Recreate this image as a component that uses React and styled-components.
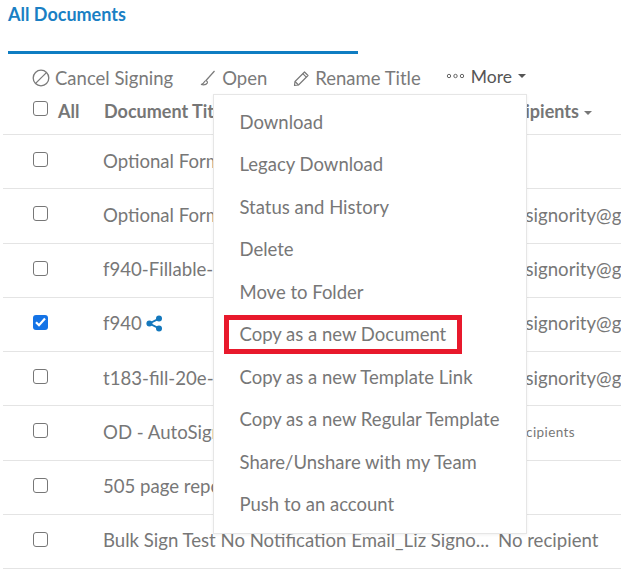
import React from 'react';
import styled, { createGlobalStyle } from 'styled-components';

const GlobalStyle = createGlobalStyle`
  html, body {
    margin: 0;
    padding: 0;
    background: #fff;
    overflow: hidden;
  }
  body {
    font-family: Lato, "Liberation Sans", sans-serif;
    color: #6f6f6f;
  }
`;

const Page = styled.div`
  position: relative;
  width: 621px;
  height: 570px;
  overflow: hidden;
`;

const Tabs = styled.div`
  margin-left: 8px;
  width: 350px;
  height: 54px;
  box-sizing: border-box;
  border-bottom: 3px solid #0f7dc2;
  padding-top: 4px;
  font-size: 18px;
  line-height: 20px;
  font-weight: 700;
  color: #1a7fc4;
`;

const Toolbar = styled.div`
  display: flex;
  align-items: center;
  height: 48px;
  padding-left: 32px;
  font-size: 18.5px;
  color: #7a7a7a;
`;

const Action = styled.div`
  display: flex;
  align-items: center;
  gap: 5px;
  margin-right: ${({ $gap }) => $gap}px;
  color: ${({ $dark }) => ($dark ? '#555' : 'inherit')};
  font-size: ${({ $dark }) => ($dark ? '17.5px' : 'inherit')};
  position: relative;
  top: ${({ $dark }) => ($dark ? '-2px' : '0')};
  white-space: nowrap;
`;

const Caret = styled.span`
  display: inline-block;
  width: 0;
  height: 0;
  vertical-align: middle;
  margin-left: ${({ $left }) => $left}px;
  border-left: 4.5px solid transparent;
  border-right: 4.5px solid transparent;
  border-top: 4.5px solid ${({ $color }) => $color || '#555'};
`;

const HeaderRow = styled.div`
  display: grid;
  grid-template-columns: 25px 46px 392px 1fr;
  align-items: center;
  height: 33px;
  box-sizing: border-box;
  margin-left: 3px;
  padding-left: 30px;
  padding-bottom: 14px;
  border-bottom: 1px solid #e4e4e4;
  font-size: 18px;
  line-height: 18px;
  font-weight: 700;
  color: #767676;
  white-space: nowrap;
`;

const Row = styled.div`
  display: grid;
  grid-template-columns: 70px 395px 1fr;
  align-items: center;
  height: 54.25px;
  box-sizing: border-box;
  margin-left: 3px;
  padding-left: 30px;
  padding-bottom: 2px;
  border-bottom: 1px solid #e4e4e4;
  font-size: 18.6px;
  color: #777;
  white-space: nowrap;
  overflow: hidden;
`;

const Box = styled.span`
  display: flex;
  align-items: center;
  justify-content: center;
  width: 15px;
  height: 15px;
  box-sizing: border-box;
  border-radius: 3px;
  border: ${({ $checked }) => ($checked ? 'none' : '1.5px solid #777')};
  background: ${({ $checked }) => ($checked ? '#1473e6' : '#fff')};
  position: relative;
  top: ${({ $up }) => ($up ? '-3px' : '-1px')};
`;

const Title = styled.span`
  display: flex;
  align-items: center;
  gap: 4px;
  overflow: hidden;
`;

const Recipient = styled.span`
  font-size: ${({ $small }) => ($small ? '13.5px' : '18.6px')};
  letter-spacing: ${({ $small }) => ($small ? '0.4px' : '0')};
`;

const Menu = styled.div`
  position: absolute;
  left: 213px;
  top: 94px;
  width: 314px;
  height: 440px;
  box-sizing: border-box;
  padding-top: 5.5px;
  background: #fff;
  border: 1px solid #e6e6e6;
  box-shadow: 0 1px 3px rgba(0, 0, 0, 0.06);
`;

const MenuItem = styled.div`
  position: relative;
  height: 42.5px;
  line-height: 42.5px;
  padding-left: 25.5px;
  font-size: 18.5px;
  color: #777;
  white-space: nowrap;

  ${({ $marked }) =>
    $marked &&
    `
    &::after {
      content: '';
      position: absolute;
      left: 10px;
      top: 1.5px;
      width: 238px;
      height: 39px;
      box-sizing: border-box;
      border: 5px solid #e8192c;
    }
  `}
`;

const CancelIcon = () => (
  <svg width="18" height="18" viewBox="0 0 18 18" fill="none" stroke="#7a7a7a" strokeWidth="1.3">
    <circle cx="9" cy="9" r="7.8" />
    <path d="M3.6 14.4 14.4 3.6" />
  </svg>
);

const OpenIcon = () => (
  <svg width="18" height="18" viewBox="0 0 18 18" fill="none" stroke="#7a7a7a" strokeWidth="1.2">
    <path d="M15.5 2 7 11.5" />
    <path d="M7 11.5c-1.5.3-2 1.6-2.4 2.6-.3.7-1.3 1.1-2.6 1.4 2 .4 5.2.4 6.2-1.4.5-1 .1-2-1.2-2.6z" />
  </svg>
);

const PencilIcon = () => (
  <svg width="17" height="17" viewBox="0 0 17 17" fill="none" stroke="#7a7a7a" strokeWidth="1.2" strokeLinejoin="round">
    <path d="M2 11.5 11.5 2l3.5 3.5L5.5 15 1.5 15.5z" />
    <path d="M9.8 3.7l3.5 3.5M2 11.5l3.5 3.5" />
  </svg>
);

const DotsIcon = () => (
  <svg width="20" height="6" viewBox="0 0 20 6" fill="none" stroke="#666" strokeWidth="1">
    <circle cx="3" cy="3" r="1.7" />
    <circle cx="9.5" cy="3" r="1.7" />
    <circle cx="16" cy="3" r="1.7" />
  </svg>
);

const CheckIcon = () => (
  <svg width="11" height="10" viewBox="0 0 11 10" fill="none" stroke="#fff" strokeWidth="2.2">
    <path d="M1 5.2 4 8.2 10 1.6" />
  </svg>
);

const ShareIcon = () => (
  <svg width="17" height="17" viewBox="0 0 17 17" fill="#1478bd" stroke="#1478bd">
    <circle cx="13" cy="3.6" r="3" stroke="none" />
    <circle cx="3.4" cy="8.5" r="3" stroke="none" />
    <circle cx="13" cy="13.4" r="3" stroke="none" />
    <path d="M13 3.6 3.4 8.5 13 13.4" fill="none" strokeWidth="1.8" />
  </svg>
);

const rows = [
  { title: 'Optional Form 306 Declaration', recipient: '' },
  { title: 'Optional Form 306 Declaration', recipient: 'otosignority@gmail.com' },
  { title: 'f940-Fillable-2020', recipient: 'otosignority@gmail.com' },
  { title: 'f940', recipient: 'otosignority@gmail.com', checked: true, shared: true },
  { title: 't183-fill-20e-2020', recipient: 'otosignority@gmail.com' },
  { title: 'OD - AutoSign Signority', recipient: '2 Recipients', small: true },
  { title: '505 page report', recipient: '' },
  { title: 'Bulk Sign Test No Notification Email_Liz Signo...', recipient: 'No recipient' },
];

const menuItems = [
  'Download',
  'Legacy Download',
  'Status and History',
  'Delete',
  'Move to Folder',
  'Copy as a new Document',
  'Copy as a new Template Link',
  'Copy as a new Regular Template',
  'Share/Unshare with my Team',
  'Push to an account',
];

export default function App() {
  return (
    <Page>
      <GlobalStyle />
      <Tabs>All Documents</Tabs>
      <Toolbar>
        <Action $gap={26}><CancelIcon />Cancel Signing</Action>
        <Action $gap={26}><OpenIcon />Open</Action>
        <Action $gap={25}><PencilIcon />Rename Title</Action>
        <Action $dark>
          <DotsIcon />More<Caret $left={1} />
        </Action>
      </Toolbar>
      <HeaderRow>
        <Box $up />
        <span>All</span>
        <span>Document Title<Caret $left={5} /></span>
        <span>Recipients<Caret $left={5} $color="#777" /></span>
      </HeaderRow>
      {rows.map((row, i) => (
        <Row key={i}>
          <Box $checked={row.checked}>{row.checked && <CheckIcon />}</Box>
          <Title>
            {row.title}
            {row.shared && <ShareIcon />}
          </Title>
          <Recipient $small={row.small}>{row.recipient}</Recipient>
        </Row>
      ))}
      <Menu>
        {menuItems.map((item) => (
          <MenuItem key={item} $marked={item === 'Copy as a new Document'}>{item}</MenuItem>
        ))}
      </Menu>
    </Page>
  );
}
